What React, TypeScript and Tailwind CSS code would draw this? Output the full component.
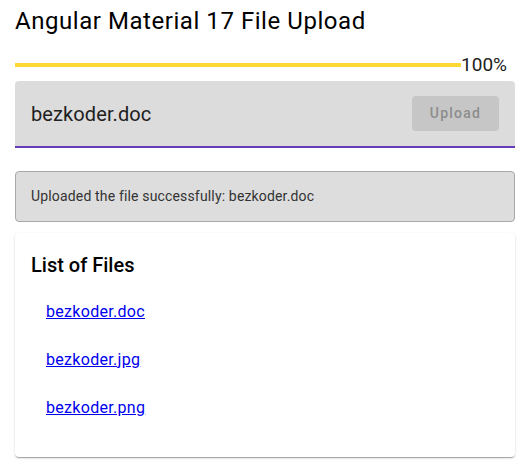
import React from "react";

const files = ["bezkoder.doc", "bezkoder.jpg", "bezkoder.png"];

export default function App() {
  return (
    <div
      className="min-h-screen bg-white px-[15px] pt-[7px] text-[#212121]"
      style={{ fontFamily: "Roboto, 'Liberation Sans', sans-serif" }}
    >
      <h1 className="text-[24px] font-normal leading-[28px] tracking-[0.55px] text-black">
        Angular Material 17 File Upload
      </h1>

      {/* progress */}
      <div className="mt-[18px] flex h-[24px] items-center pr-[8px]">
        <div className="h-[4px] flex-1 bg-[#fdd835]" />
        <span className="text-[19px] leading-[24px] text-[#212121]">100%</span>
      </div>

      {/* file field */}
      <div className="mt-[4px] flex h-[67px] items-center justify-between rounded-t-[4px] border-b-2 border-[#673ab7] bg-[#dcdcdc] pl-[16px] pr-[16px]">
        <span className="text-[20px] leading-[24px] tracking-[0.1px] text-[#212121]">bezkoder.doc</span>
        <button
          disabled
          className="h-[35px] w-[87px] rounded-[4px] bg-[#c6c6c6] text-[14px] font-medium tracking-[1.25px] text-[#8d8d8d]"
        >
          Upload
        </button>
      </div>

      {/* message */}
      <div className="mt-[23px] flex h-[51px] items-center rounded-[4px] border border-[#a9a9a9] bg-[#dddddd] px-[15px] text-[14px] tracking-[0.16px] text-[#333333]">
        Uploaded the file successfully: bezkoder.doc
      </div>

      {/* list */}
      <div className="mt-[11px] rounded-[4px] bg-white px-[16px] pb-[25px] pt-[18px] shadow-[0_2px_1px_-1px_rgba(0,0,0,0.2),0_1px_1px_0_rgba(0,0,0,0.14),0_1px_3px_0_rgba(0,0,0,0.12)]">
        <h2 className="text-[20px] font-medium leading-[28px] text-black">List of Files</h2>
        <ul className="mt-[9px] pl-[15px]">
          {files.map((f) => (
            <li key={f} className="text-[16px] leading-[48px] tracking-[0.3px]">
              <a href="#" className="text-[#0000ee] underline">
                {f}
              </a>
            </li>
          ))}
        </ul>
      </div>
    </div>
  );
}
